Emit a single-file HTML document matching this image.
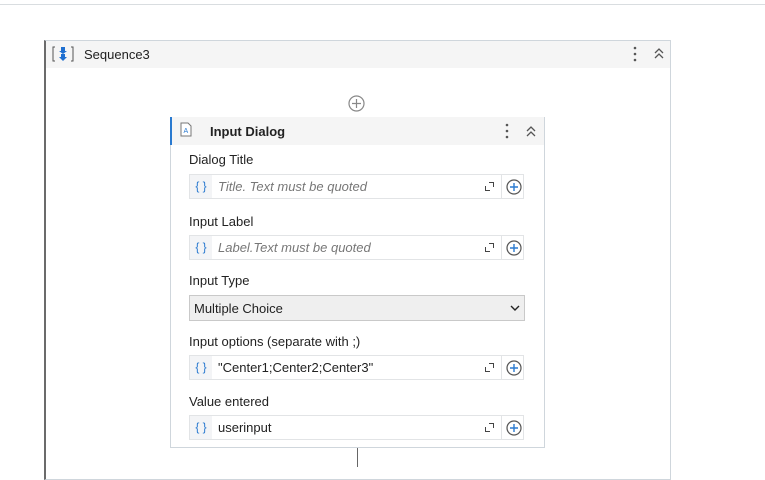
<!DOCTYPE html>
<html><head><meta charset="utf-8"><style>
body{margin:0;width:765px;height:467px;overflow:hidden;background:#fff;font-family:"Liberation Sans",sans-serif;position:relative}
.a{position:absolute}
.lbl{position:absolute;left:189px;font-size:13px;color:#222}
.inp{position:absolute;left:189px;width:335px;height:25px;border:1px solid #e2e4e6;background:#fff;box-sizing:border-box}
.inp .br{position:absolute;left:0;top:0;width:22px;height:23px;background:#f3f4f6;color:#2a7ad0;font-size:12px;text-align:center;line-height:23px}
.inp .tx{position:absolute;left:28px;top:0;line-height:23px;font-size:13px;color:#222}
.inp .ph{font-style:italic;color:#777}
.inp .ex{position:absolute;left:295px;top:7px;width:9px;height:9px}
.inp .pl{position:absolute;left:311px;top:0;width:23px;height:23px;border-left:1px solid #e2e4e6}
</style></head><body>
<div class="a" style="left:0;top:4px;width:765px;height:1px;background:#d9dde0"></div>
<div class="a" style="left:44px;top:40px;width:627px;height:440px;border:1px solid #cfd6dc;border-left:2px solid #6b6b6b;box-sizing:border-box"></div>
<div class="a" style="left:46px;top:41px;width:624px;height:27px;background:#f5f5f5"></div>
<svg class="a" style="left:52px;top:45px" width="22" height="18" viewBox="0 0 22 18">
<path d="M3 2H1V16H3M19 2H21V16H19" stroke="#555" fill="none" stroke-width="1"/>
<path d="M9 2h4v4h2l-4 3-4-3h2z" fill="#1f6fd0"/><path d="M9 9h4v3h2l-4 4-4-4h2z" fill="#1f6fd0"/></svg>
<div class="a" style="left:84px;top:47px;font-size:13px;color:#222">Sequence3</div>
<svg class="a" style="left:630px;top:45px" width="40" height="20"><circle cx="5" cy="3" r="1.3" fill="#555"/><circle cx="5" cy="9" r="1.3" fill="#555"/><circle cx="5" cy="15" r="1.3" fill="#555"/><path d="M25 8l4-4 4 4M25 13l4-4 4 4" stroke="#555" fill="none" stroke-width="1.3"/></svg>
<svg class="a" style="left:347px;top:94px" width="19" height="19"><circle cx="9.5" cy="9.5" r="7.5" stroke="#888" fill="none" stroke-width="1.2"/><path d="M9.5 5v9M5 9.5h9" stroke="#888" stroke-width="1.2"/></svg>
<div class="a" style="left:170px;top:117px;width:375px;height:331px;border:1px solid #cfd6dc;box-sizing:border-box;background:#fff"></div>
<div class="a" style="left:170px;top:117px;width:374px;height:28px;background:#f5f5f5;border-left:2px solid #2a7ad0;box-sizing:border-box"></div>
<svg class="a" style="left:180px;top:122px" width="12" height="15"><path d="M1 1h7l3 3v10H1z" fill="#fff" stroke="#777"/><text x="3.5" y="11" font-size="7" fill="#2a7ad0" font-family="Liberation Sans">A</text></svg>
<div class="a" style="left:210px;top:124px;font-size:13px;font-weight:bold;color:#222">Input Dialog</div>
<svg class="a" style="left:502px;top:122px" width="40" height="20"><circle cx="5" cy="3" r="1.3" fill="#555"/><circle cx="5" cy="9" r="1.3" fill="#555"/><circle cx="5" cy="15" r="1.3" fill="#555"/><path d="M25 9l4-4 4 4M25 14l4-4 4 4" stroke="#555" fill="none" stroke-width="1.3"/></svg>

<div class="lbl" style="top:152px">Dialog Title</div>
<div class="inp" style="top:174px"><div class="br">{ }</div><div class="tx ph">Title. Text must be quoted</div>
<svg class="ex"><path d="M0.5 4v4.5H5M4 .5h4.5V5" stroke="#444" fill="none"/></svg>
<svg class="pl"><circle cx="12" cy="12" r="7" stroke="#555" fill="none" stroke-width="1.2"/><path d="M12 8v8M8 12h8" stroke="#2a7ad0" stroke-width="1.4"/></svg></div>

<div class="lbl" style="top:214px">Input Label</div>
<div class="inp" style="top:235px"><div class="br">{ }</div><div class="tx ph">Label.Text must be quoted</div>
<svg class="ex"><path d="M0.5 4v4.5H5M4 .5h4.5V5" stroke="#444" fill="none"/></svg>
<svg class="pl"><circle cx="12" cy="12" r="7" stroke="#555" fill="none" stroke-width="1.2"/><path d="M12 8v8M8 12h8" stroke="#2a7ad0" stroke-width="1.4"/></svg></div>

<div class="lbl" style="top:273px">Input Type</div>
<div class="a" style="left:189px;top:295px;width:336px;height:26px;border:1px solid #c9c9c9;background:#efefef;box-sizing:border-box"><div class="a" style="left:4px;top:5px;font-size:13px;color:#222">Multiple Choice</div>
<svg class="a" style="left:320px;top:9px" width="10" height="7"><path d="M1 1l4 4 4-4" stroke="#222" fill="none" stroke-width="1.4"/></svg></div>

<div class="lbl" style="top:334px">Input options (separate with ;)</div>
<div class="inp" style="top:355px"><div class="br">{ }</div><div class="tx">"Center1;Center2;Center3"</div>
<svg class="ex"><path d="M0.5 4v4.5H5M4 .5h4.5V5" stroke="#444" fill="none"/></svg>
<svg class="pl"><circle cx="12" cy="12" r="7" stroke="#555" fill="none" stroke-width="1.2"/><path d="M12 8v8M8 12h8" stroke="#2a7ad0" stroke-width="1.4"/></svg></div>

<div class="lbl" style="top:394px">Value entered</div>
<div class="inp" style="top:415px"><div class="br">{ }</div><div class="tx">userinput</div>
<svg class="ex"><path d="M0.5 4v4.5H5M4 .5h4.5V5" stroke="#444" fill="none"/></svg>
<svg class="pl"><circle cx="12" cy="12" r="7" stroke="#555" fill="none" stroke-width="1.2"/><path d="M12 8v8M8 12h8" stroke="#2a7ad0" stroke-width="1.4"/></svg></div>

<div class="a" style="left:357px;top:448px;width:1px;height:19px;background:#666"></div>
</body></html>
